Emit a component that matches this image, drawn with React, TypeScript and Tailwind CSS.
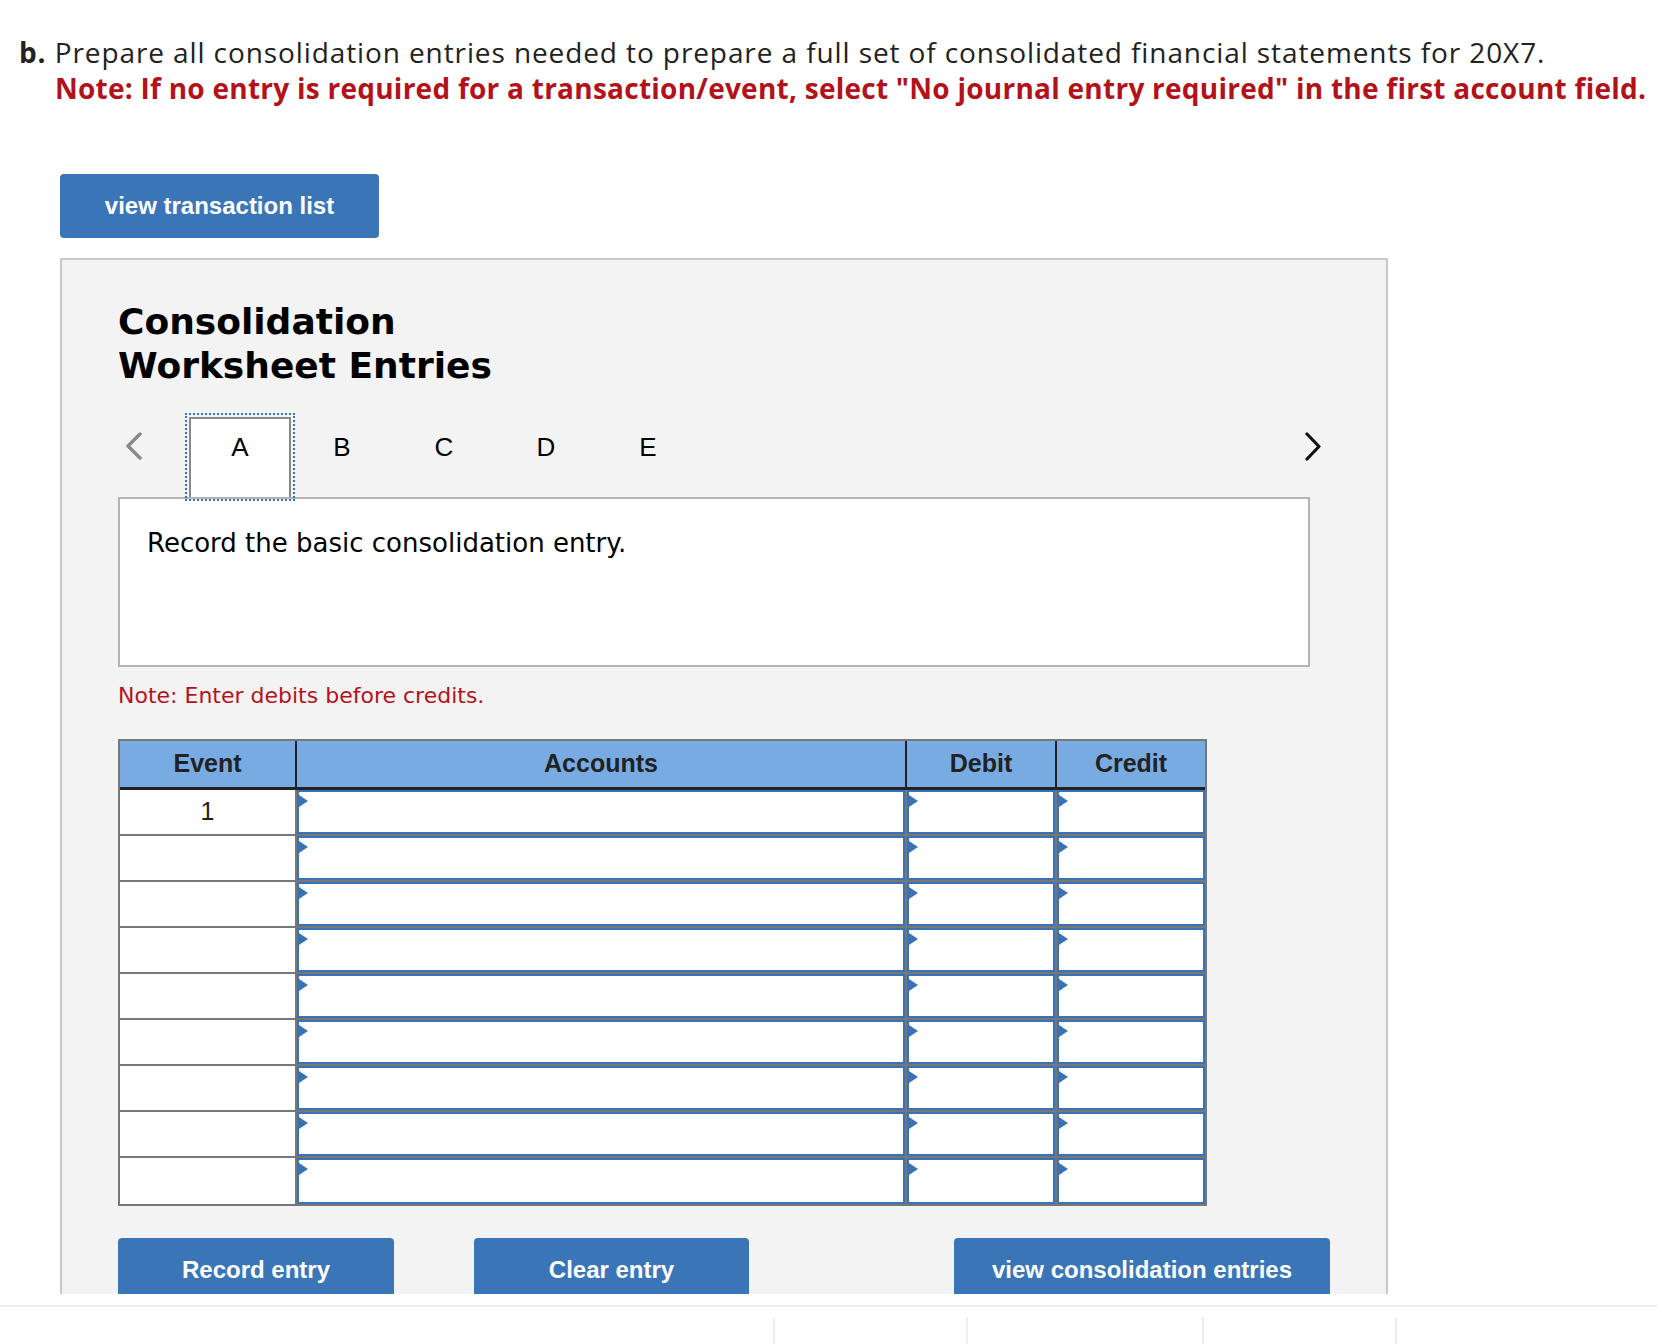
import React from 'react';

const rows = Array.from({ length: 9 }, (_, i) => i);

function Chevron({ dir }: { dir: 'left' | 'right' }) {
  if (dir === 'left') {
    return (
      <svg width="18" height="28" viewBox="0 0 18 28" fill="none">
        <path d="M15 2 L3 14 L15 26" stroke="#8a8a8a" strokeWidth="3.5" strokeLinecap="round" strokeLinejoin="round" />
      </svg>
    );
  }
  return (
    <svg width="18" height="30" viewBox="0 0 18 30" fill="none">
      <path d="M3 2 L15 14.5 L3 27" stroke="#111" strokeWidth="3.2" strokeLinecap="round" strokeLinejoin="round" />
    </svg>
  );
}

function InputCell({ className }: { className: string }) {
  return (
    <div className={`${className} h-full border-r-2 border-[#777]`}>
      <div className="relative h-full border-2 border-[#3a73b5] bg-white">
        <span className="absolute left-0 top-[3px] h-0 w-0 border-y-[6px] border-l-[9px] border-y-transparent border-l-[#3a73b5]" />
      </div>
    </div>
  );
}

export default function App() {
  const tabs = ['A', 'B', 'C', 'D', 'E'];

  return (
    <div className="relative min-h-[1344px] overflow-hidden bg-white text-[#222]">
      {/* question text */}
      <div className="pl-[19px] pt-[34px] font-['Open_Sans',sans-serif] text-[28px] leading-[36px]">
        <p className="tracking-[0.9px]">
          <span className="font-bold">b.</span> Prepare all consolidation entries needed to prepare a full set of consolidated financial statements for 20X7.
        </p>
        <p className="whitespace-nowrap pl-[36px] font-bold tracking-[0.25px] text-[#b3121a]">
          Note: If no entry is required for a transaction/event, select "No journal entry required" in the first account field.
        </p>
      </div>

      <button className="ml-[60px] mt-[68px] flex h-[64px] w-[319px] items-center justify-center rounded-[4px] bg-[#3a76b7] font-['Liberation_Sans',Arial,sans-serif] text-[24px] font-bold text-white">
        view transaction list
      </button>

      {/* worksheet panel */}
      <div className="ml-[60px] mt-[20px] w-[1328px] border-2 border-b-0 border-[#c8c8c8] bg-[#f3f3f3] pb-[120px] pl-[56px] pt-[40px]">
        <h2 className="w-[420px] font-['DejaVu_Sans',Verdana,sans-serif] text-[36px] font-bold leading-[44px] text-black">
          Consolidation Worksheet Entries
        </h2>

        <div className="mt-[29px] flex h-[80px] w-[1204px] items-start font-['Liberation_Sans',Arial,sans-serif] text-[26px] leading-[30px] text-black">
          <div className="w-[71px] pl-[7px] pt-[15px]">
            <Chevron dir="left" />
          </div>
          {tabs.map((t, i) => (
            <div
              key={t}
              className={
                i === 0
                  ? 'h-[80px] w-[102px] border-2 border-b-0 border-[#8a8a8a] bg-white pt-[13px] text-center outline-2 outline-offset-[2px] outline-dotted outline-[#2f78d0]'
                  : 'h-[80px] w-[102px] border-2 border-b-0 border-transparent pt-[13px] text-center'
              }
            >
              {t}
            </div>
          ))}
          <div className="ml-auto pt-[15px]">
            <Chevron dir="right" />
          </div>
        </div>

        <div className="h-[170px] w-[1192px] border-2 border-[#b4b4b4] bg-white pl-[27px] pt-[26px] font-['DejaVu_Sans',Verdana,sans-serif] text-[26px] leading-[36px] text-black">
          Record the basic consolidation entry.
        </div>

        <p className="mt-[14px] font-['DejaVu_Sans',Verdana,sans-serif] text-[22px] leading-[30px] text-[#b5121b]">
          Note: Enter debits before credits.
        </p>

        {/* journal table */}
        <div className="mt-[28px] w-[1089px] border-2 border-[#777] bg-white font-['Liberation_Sans',Arial,sans-serif] text-[25px] text-[#222]">
          <div className="flex h-[49px] border-b-[3px] border-[#222] bg-[#78abe2] font-bold">
            <div className="flex w-[177px] items-center justify-center border-r-2 border-[#222]">Event</div>
            <div className="flex w-[610px] items-center justify-center border-r-2 border-[#222]">Accounts</div>
            <div className="flex w-[150px] items-center justify-center border-r-2 border-[#222]">Debit</div>
            <div className="flex w-[148px] items-center justify-center">Credit</div>
          </div>
          {rows.map((r) => (
            <div key={r} className={`flex h-[46px] ${r < 8 ? 'border-b-2 border-[#777]' : ''}`}>
              <div className="flex h-full w-[177px] items-center justify-center border-r-2 border-[#777]">
                {r === 0 ? '1' : ''}
              </div>
              <InputCell className="w-[610px]" />
              <InputCell className="w-[150px]" />
              <div className="h-full w-[148px]">
                <div className="relative h-full border-2 border-[#3a73b5] bg-white">
                  <span className="absolute left-0 top-[3px] h-0 w-0 border-y-[6px] border-l-[9px] border-y-transparent border-l-[#3a73b5]" />
                </div>
              </div>
            </div>
          ))}
        </div>

        <div className="mt-[32px] flex font-['Liberation_Sans',Arial,sans-serif] text-[24px] font-bold text-white">
          <button className="h-[64px] w-[276px] rounded-[4px] bg-[#3a76b7]">Record entry</button>
          <button className="ml-[80px] h-[64px] w-[275px] rounded-[4px] bg-[#3a76b7]">Clear entry</button>
          <button className="ml-[205px] h-[64px] w-[376px] rounded-[4px] bg-[#3a76b7]">view consolidation entries</button>
        </div>
      </div>

      {/* bottom toolbar overlay */}
      <div className="fixed inset-x-0 bottom-0 h-[50px] bg-white">
        <div className="mt-[11px] h-[2px] bg-[#eeeeee]" />
        <div className="mt-[10px] flex h-[27px]">
          <div className="w-[773px]" />
          <div className="w-[193px] border-l-2 border-[#eeeeee]" />
          <div className="w-[236px] border-l-2 border-[#eeeeee]" />
          <div className="w-[193px] border-l-2 border-[#eeeeee]" />
          <div className="flex-1 border-l-2 border-[#eeeeee]" />
        </div>
      </div>
    </div>
  );
}
